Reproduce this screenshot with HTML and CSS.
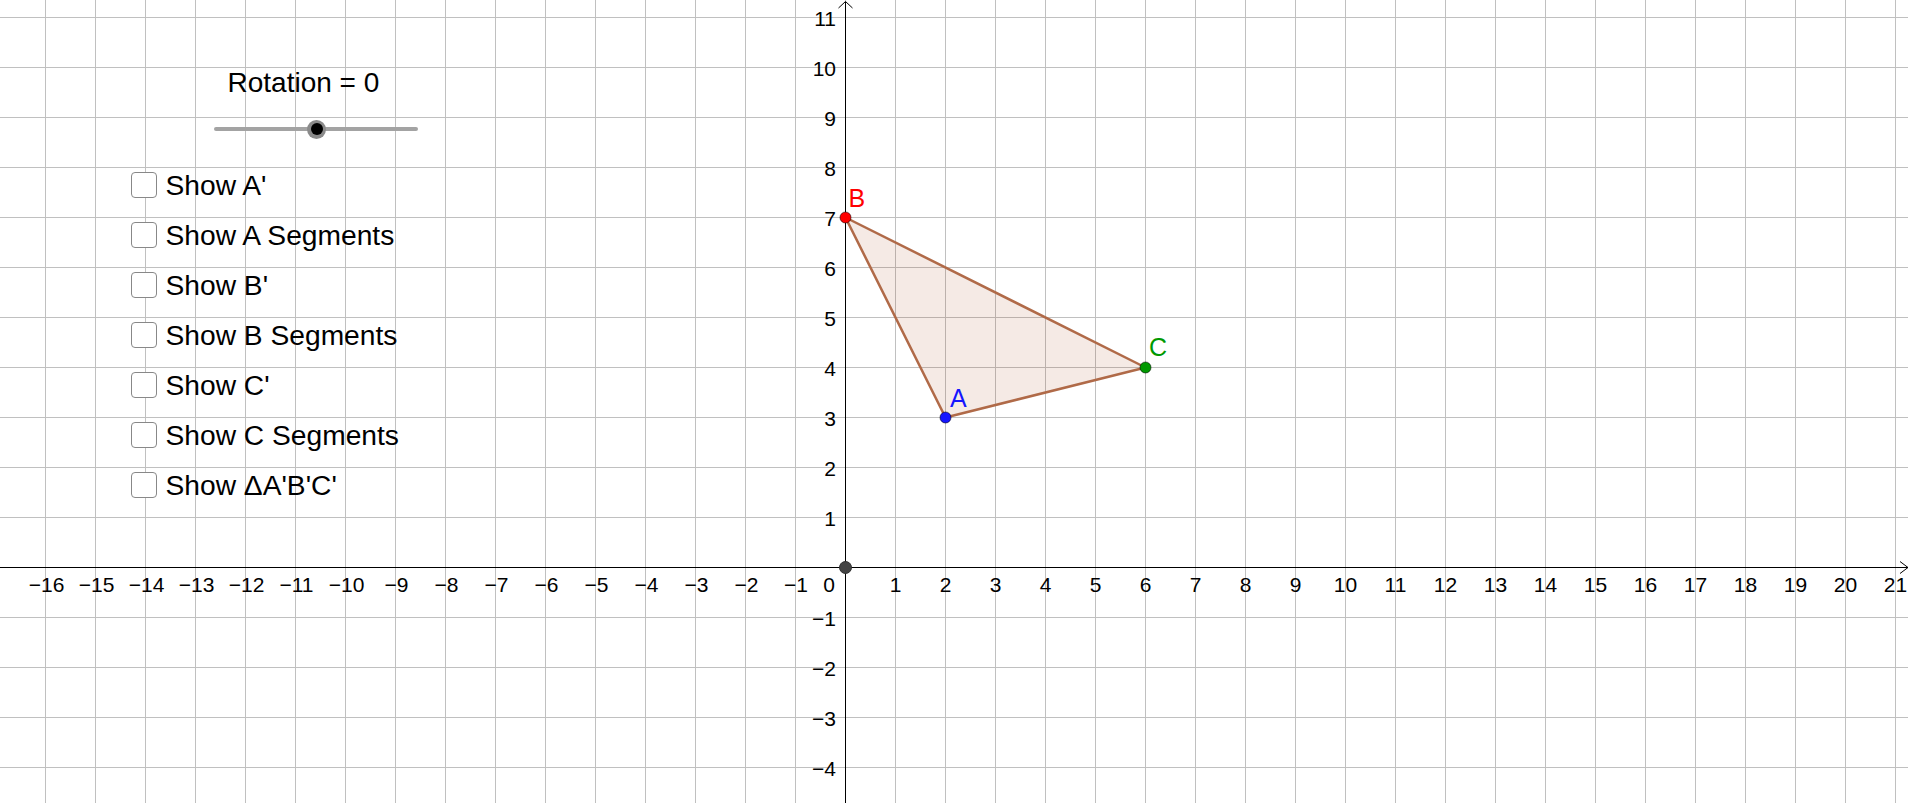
FILE: index.html
```html
<!DOCTYPE html>
<html>
<head>
<meta charset="utf-8">
<title>Rotation</title>
<link rel="stylesheet" href="styles.css">
</head>
<body>
<div class="board">
  <svg class="graph" width="1911" height="806" viewBox="0 0 1911 806" xmlns="http://www.w3.org/2000/svg">
    <defs>
      <pattern id="grid" patternUnits="userSpaceOnUse" x="45" y="17" width="50" height="50">
        <path d="M0.5 0V50M0 0.5H50" class="gridline"/>
      </pattern>
    </defs>
    <rect x="0" y="0" width="1908" height="803" fill="url(#grid)"/>
    <!-- axes -->
    <path class="axis" d="M0 567.5H1908M1900 561.5L1908 567.5L1900 573.5"/>
    <path class="axis" d="M845.5 2V803M838.5 8L845.5 1.5L852.5 8"/>
    <!-- x labels -->
    <g class="xl">
      <text x="46.5" y="592">−16</text>
      <text x="96.5" y="592">−15</text>
      <text x="146.5" y="592">−14</text>
      <text x="196.5" y="592">−13</text>
      <text x="246.5" y="592">−12</text>
      <text x="296.5" y="592">−11</text>
      <text x="346.5" y="592">−10</text>
      <text x="396.5" y="592">−9</text>
      <text x="446.5" y="592">−8</text>
      <text x="496.5" y="592">−7</text>
      <text x="546.5" y="592">−6</text>
      <text x="596.5" y="592">−5</text>
      <text x="646.5" y="592">−4</text>
      <text x="696.5" y="592">−3</text>
      <text x="746.5" y="592">−2</text>
      <text x="796" y="592">−1</text>
      <text x="829" y="592">0</text>
      <text x="895.5" y="592">1</text>
      <text x="945.5" y="592">2</text>
      <text x="995.5" y="592">3</text>
      <text x="1045.5" y="592">4</text>
      <text x="1095.5" y="592">5</text>
      <text x="1145.5" y="592">6</text>
      <text x="1195.5" y="592">7</text>
      <text x="1245.5" y="592">8</text>
      <text x="1295.5" y="592">9</text>
      <text x="1345.5" y="592">10</text>
      <text x="1395.5" y="592">11</text>
      <text x="1445.5" y="592">12</text>
      <text x="1495.5" y="592">13</text>
      <text x="1545.5" y="592">14</text>
      <text x="1595.5" y="592">15</text>
      <text x="1645.5" y="592">16</text>
      <text x="1695.5" y="592">17</text>
      <text x="1745.5" y="592">18</text>
      <text x="1795.5" y="592">19</text>
      <text x="1845.5" y="592">20</text>
      <text x="1895.5" y="592">21</text>
    </g>
    <!-- y labels -->
    <g class="yl">
      <text x="836" y="26">11</text>
      <text x="836" y="76">10</text>
      <text x="836" y="126">9</text>
      <text x="836" y="176">8</text>
      <text x="836" y="226">7</text>
      <text x="836" y="276">6</text>
      <text x="836" y="326">5</text>
      <text x="836" y="376">4</text>
      <text x="836" y="426">3</text>
      <text x="836" y="476">2</text>
      <text x="836" y="526">1</text>
      <text x="836" y="626">−1</text>
      <text x="836" y="676">−2</text>
      <text x="836" y="726">−3</text>
      <text x="836" y="776">−4</text>
    </g>
    <!-- triangle -->
    <polygon class="tri" points="945.5,417.5 845.5,217.5 1145.5,367.5"/>
    <!-- points -->
    <circle class="pt pt-o" cx="845.5" cy="567.5" r="6"/>
    <circle class="pt pt-b" cx="845.5" cy="217.5" r="5.5"/>
    <circle class="pt pt-a" cx="945.5" cy="417.5" r="5.5"/>
    <circle class="pt pt-c" cx="1145.5" cy="367.5" r="5.5"/>
    <text class="plabel lb" x="848.5" y="207">B</text>
    <text class="plabel la" x="950" y="407">A</text>
    <text class="plabel lc" x="1149" y="355.5">C</text>
  </svg>

  <div class="slider-widget">
    <div class="slider-label">Rotation = 0</div>
    <div class="track">
      <span class="knob"><span class="knob-core"></span></span>
    </div>
  </div>

  <div class="checks">
    <div class="check"><span class="box"></span><span class="label">Show A'</span></div>
    <div class="check"><span class="box"></span><span class="label">Show A Segments</span></div>
    <div class="check"><span class="box"></span><span class="label">Show B'</span></div>
    <div class="check"><span class="box"></span><span class="label">Show B Segments</span></div>
    <div class="check"><span class="box"></span><span class="label">Show C'</span></div>
    <div class="check"><span class="box"></span><span class="label">Show C Segments</span></div>
    <div class="check"><span class="box"></span><span class="label">Show ΔA'B'C'</span></div>
  </div>
</div>
</body>
</html>
```

FILE: styles.css
```css
html, body {
  margin: 0;
  padding: 0;
  background: #ffffff;
  overflow: hidden;
}

.board {
  position: relative;
  width: 1911px;
  height: 806px;
  font-family: "Liberation Sans", Arial, sans-serif;
  color: #000;
}

.graph {
  display: block;
}

.gridline {
  fill: none;
  stroke: #c0c0c0;
  stroke-width: 1;
}

.axis {
  fill: none;
  stroke: #000;
  stroke-width: 1;
}

.xl text,
.yl text {
  font-family: "Liberation Sans", Arial, sans-serif;
  font-size: 21px;
  fill: #000;
}

.xl text { text-anchor: middle; }
.yl text { text-anchor: end; }

.tri {
  fill: rgba(153, 51, 0, 0.1);
  stroke: #b06a48;
  stroke-width: 2.5;
  stroke-linejoin: round;
}

.pt {
  stroke: rgba(0, 0, 0, 0.55);
  stroke-width: 1;
}
.pt-o { fill: #444444; stroke: #333; }
.pt-a { fill: #1515ff; }
.pt-b { fill: #ff0000; }
.pt-c { fill: #009900; }

.plabel {
  font-family: "Liberation Sans", Arial, sans-serif;
  font-size: 25px;
}
.la { fill: #1515ff; }
.lb { fill: #ff0000; }
.lc { fill: #009900; }

/* slider overlay */
.slider-widget {
  position: absolute;
  left: 212px;
  top: 67px;
  display: flex;
  flex-direction: column;
}

.slider-label {
  font-size: 28px;
  line-height: 32px;
  margin-left: 15.5px;
  white-space: nowrap;
}

.track {
  position: relative;
  margin-top: 28px;
  margin-left: 2px;
  width: 204px;
  height: 4px;
  border-radius: 2px;
  background: #a3a3a3;
}

.knob {
  position: absolute;
  left: 93px;
  top: -7.5px;
  width: 19px;
  height: 19px;
  border-radius: 50%;
  background: #8a8a8a;
  display: flex;
  align-items: center;
  justify-content: center;
}

.knob-core {
  width: 12px;
  height: 12px;
  border-radius: 50%;
  background: #000;
}

/* checkbox overlay */
.checks {
  position: absolute;
  left: 131px;
  top: 172px;
  display: flex;
  flex-direction: column;
  gap: 23.2px;
}

.check {
  display: flex;
  align-items: flex-start;
  gap: 8.5px;
}

.box {
  box-sizing: border-box;
  width: 26px;
  height: 26px;
  border: 1.5px solid #888888;
  border-radius: 4px;
  background: #fff;
  flex: none;
}

.label {
  font-size: 28.2px;
  line-height: 26.8px;
  white-space: nowrap;
}
```
